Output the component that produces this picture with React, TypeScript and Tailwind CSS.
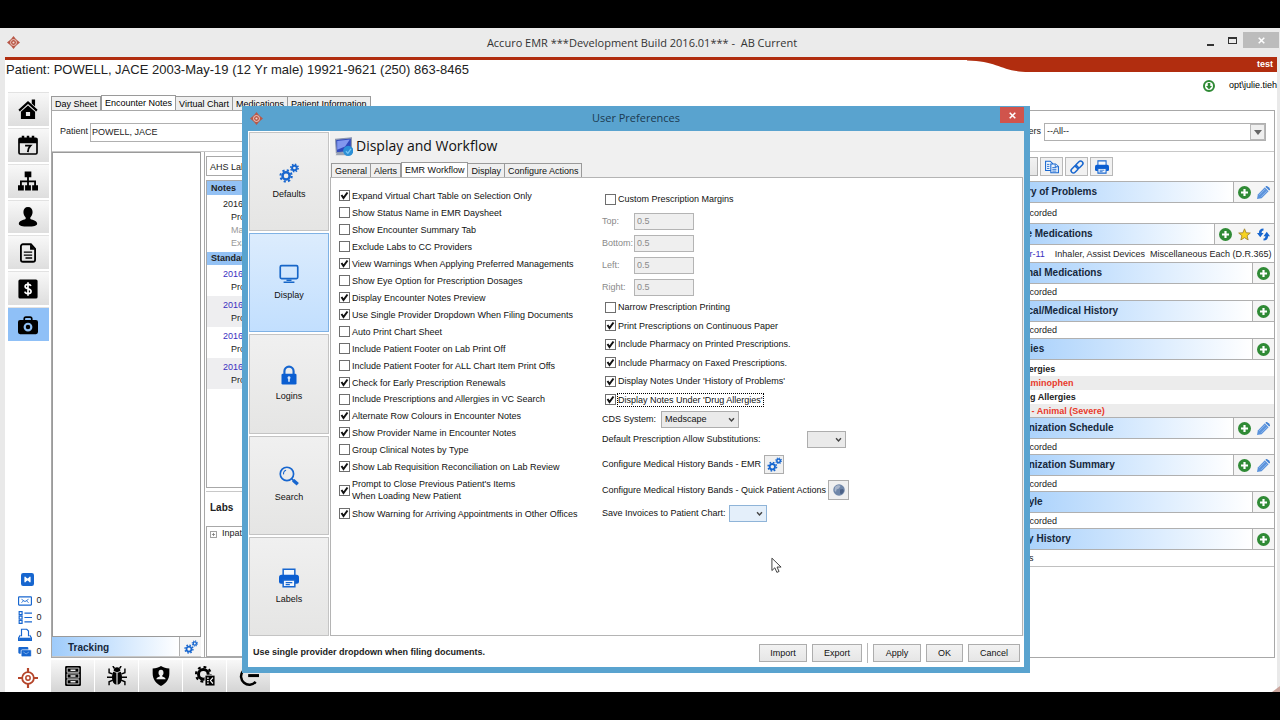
import type { ReactNode } from 'react';
import { clsx } from 'clsx';

/* ---------- icons ---------- */

type IconProps = { className?: string };

function TargetIcon({ className }: IconProps) {
  return (
    <svg viewBox="0 0 24 24" className={className} fill="none" stroke="currentColor">
      <circle cx="12" cy="12" r="7" strokeWidth="2.2" />
      <circle cx="12" cy="12" r="2.6" strokeWidth="1.8" />
      <path d="M12 0v6M12 18v6M0 12h6M18 12h6" strokeWidth="2.6" />
    </svg>
  );
}

function DiamondTargetIcon({ className }: IconProps) {
  return (
    <svg viewBox="0 0 24 24" className={className}>
      <path d="M12 0l4 5 3 3 5 4-5 4-3 3-4 5-4-5-3-3-5-4 5-4 3-3z" fill="#b85848" />
      <circle cx="12" cy="12" r="5.5" fill="none" stroke="#f3d9d2" strokeWidth="1.6" />
      <circle cx="12" cy="12" r="2" fill="#f3d9d2" />
    </svg>
  );
}

function GearsIcon({ className }: IconProps) {
  return (
    <svg viewBox="0 0 24 24" className={className} fill="none" stroke="#1766cf">
      <circle cx="8.5" cy="15.5" r="4.3" strokeWidth="3" />
      <circle cx="8.5" cy="15.5" r="6.8" strokeWidth="2.4" strokeDasharray="2.67 2.67" />
      <circle cx="18.5" cy="6" r="2.8" strokeWidth="2.4" />
      <circle cx="18.5" cy="6" r="4.5" strokeWidth="1.8" strokeDasharray="1.77 1.77" />
    </svg>
  );
}

function HomeIcon({ className }: IconProps) {
  return (
    <svg viewBox="0 0 24 24" className={className} fill="#000">
      <path d="M0.500 13L12 2.500 23.500 13l-1.700 1.900L12 6 2.200 14.900z" />
      <path d="M16.500 0.500h4v8.500l-4-3.600z" />
      <path fillRule="evenodd" d="M12 7.700l8.500 7.700V24h-17v-8.600zM9.500 15.500v5h5v-5z" />
    </svg>
  );
}

function CalendarIcon({ className }: IconProps) {
  return (
    <svg viewBox="0 0 24 24" className={className}>
      <rect x="1.200" y="4" width="21.600" height="18.800" rx="1.500" fill="none" stroke="#000" strokeWidth="2" />
      <path d="M1 4h22v6H1zM4.500 1h3v4h-3zM10.500 1h3v4h-3zM16.500 1h3v4h-3z" fill="#000" />
      <path d="M8.500 12.800h6.500c-2.500 2.500-3 4.500-3.200 7.700" fill="none" stroke="#000" strokeWidth="2.200" />
    </svg>
  );
}

function OrgChartIcon({ className }: IconProps) {
  return (
    <svg viewBox="0 0 24 24" className={className}>
      <path d="M8 0.500h8v7H8zM0 17h7v6.500H0zM8.500 17h7v6.500h-7zM17 17h7v6.500h-7z" fill="#000" />
      <path d="M12 7v11M3.500 18v-5.500h17V18" fill="none" stroke="#000" strokeWidth="2.200" />
    </svg>
  );
}

function PersonIcon({ className }: IconProps) {
  return (
    <svg viewBox="0 0 24 24" className={className} fill="#000">
      <path d="M12 0c3.600 0 5.500 2.500 5.500 6 0 2.500-1 5-2.700 6.500v2c3.500 1.300 8.200 2.500 8.200 5.500 0 2.300-4.500 3.500-11 3.500S1 22.300 1 20c0-3 4.700-4.200 8.200-5.500v-2C7.500 11 6.500 8.500 6.500 6c0-3.500 1.900-6 5.500-6z" />
    </svg>
  );
}

function DocumentIcon({ className }: IconProps) {
  return (
    <svg viewBox="0 0 24 24" className={className} fill="none" stroke="#000" strokeWidth="2.200">
      <path d="M6 1.500h9.500L20.500 7v13a2.500 2.500 0 0 1-2.500 2.500H6A2.500 2.500 0 0 1 3.500 20V4A2.500 2.500 0 0 1 6 1.500z" />
      <path d="M14.500 1.500v6.500h6z" fill="#000" stroke="none" />
      <path d="M7 11h10M7 14.500h10M9 18h8" strokeWidth="1.600" />
    </svg>
  );
}

function BillingIcon({ className }: IconProps) {
  return (
    <svg viewBox="0 0 24 24" className={className}>
      <rect x="0.500" y="0.500" width="23" height="23" rx="2" fill="#000" />
      <path
        d="M15.500 8.500C15 7 13.700 6.500 12 6.500c-2 0-3.500.9-3.500 2.600 0 3.900 7.200 1.700 7.200 5.700 0 1.800-1.600 2.800-3.700 2.800-1.900 0-3.400-.8-3.800-2.500M12 4v16"
        fill="none"
        stroke="#fff"
        strokeWidth="2"
      />
    </svg>
  );
}

function MedicalBagIcon({ className }: IconProps) {
  return (
    <svg viewBox="0 0 24 24" className={className}>
      <path d="M7.500 7V4.500A2 2 0 0 1 9.500 2.500h5a2 2 0 0 1 2 2V7" fill="none" stroke="#000" strokeWidth="2" />
      <rect x="0" y="6" width="24" height="17" rx="2.500" fill="#000" />
      <circle cx="12" cy="14.500" r="4" fill="none" stroke="#8fc0f5" strokeWidth="2.600" />
    </svg>
  );
}

function MonitorIcon({ className }: IconProps) {
  return (
    <svg viewBox="0 0 24 24" className={className} fill="none" stroke="#1766c8">
      <rect x="1.500" y="2" width="21" height="15.500" rx="1.500" strokeWidth="2" />
      <path d="M9 19.500h6M5.500 22h13" strokeWidth="1.800" />
    </svg>
  );
}

function LockIcon({ className }: IconProps) {
  return (
    <svg viewBox="0 0 24 24" className={className}>
      <path d="M6.500 11V7.500a5.500 5.500 0 0 1 11 0V11" fill="none" stroke="#1766cf" strokeWidth="2.600" />
      <rect x="3" y="10.500" width="18" height="13" rx="1.500" fill="#0b5ed1" />
      <path d="M12 13.500a1.800 1.800 0 0 1 1 3.300V20h-2v-3.200a1.800 1.800 0 0 1 1-3.300z" fill="#d7e6fa" />
    </svg>
  );
}

function SearchIcon({ className }: IconProps) {
  return (
    <svg viewBox="0 0 24 24" className={className} fill="none" stroke="#1766cf">
      <circle cx="9.500" cy="9.500" r="8" strokeWidth="2" />
      <path d="M5.500 10a4 4 0 0 1 3-4.800" strokeWidth="1.300" />
      <path d="M15.500 15.500l2 2" strokeWidth="2" />
      <path d="M17 17l5.500 5" strokeWidth="4" />
    </svg>
  );
}

function PrinterIcon({ className }: IconProps) {
  return (
    <svg viewBox="0 0 24 24" className={className}>
      <path d="M5 9V1.500h14V9" fill="#f4f8fd" stroke="#1766cf" strokeWidth="1.800" />
      <path d="M3 8h18a3 3 0 0 1 3 3v5.500a2.500 2.500 0 0 1-2.500 2.500h-19A2.500 2.500 0 0 1 0 16.500V11a3 3 0 0 1 3-3z" fill="#0b5ed1" />
      <path d="M5 14.500h14v8H5z" fill="#f4f8fd" stroke="#1766cf" strokeWidth="1.800" />
      <path d="M8 17.500h8M8 20h5" stroke="#1766cf" strokeWidth="1.400" />
    </svg>
  );
}

function CopyIcon({ className }: IconProps) {
  return (
    <svg viewBox="0 0 24 24" className={className} fill="#eef5fd" stroke="#1766cf" strokeWidth="1.800">
      <path d="M1 2h8l4 4v12H1z" />
      <path d="M10 7h8l5 4v11H10z" />
      <path d="M3.500 7.500h4M3.500 11h4M3.500 14.500h4M12.500 13h7M12.500 16h7M12.500 19h7M17.500 7v4.500H23" strokeWidth="1.500" />
    </svg>
  );
}

function LinkIcon({ className }: IconProps) {
  return (
    <svg viewBox="0 0 24 24" className={className} fill="none" stroke="#1766cf" strokeWidth="2.600">
      <rect x="-7" y="-4" width="14" height="8" rx="4" transform="translate(8 16) rotate(-45)" />
      <rect x="-7" y="-4" width="14" height="8" rx="4" transform="translate(16 8) rotate(-45)" />
    </svg>
  );
}

function PlusIcon({ className }: IconProps) {
  return (
    <svg viewBox="0 0 24 24" className={className}>
      <circle cx="12" cy="12" r="12" fill="#2f8a35" />
      <path d="M12 5.500v13M5.500 12h13" stroke="#fff" strokeWidth="4" />
    </svg>
  );
}

function DownloadIcon({ className }: IconProps) {
  return (
    <svg viewBox="0 0 24 24" className={className}>
      <circle cx="12" cy="12" r="10" fill="#fff" stroke="#2f8a35" strokeWidth="4" />
      <path d="M9.500 6h5v6H18l-6 7-6-7h3.500z" fill="#2f8a35" />
    </svg>
  );
}

function PencilIcon({ className }: IconProps) {
  return (
    <svg viewBox="0 0 24 24" className={className}>
      <path d="M0 24l1.500-8.500L14.500 2.500l7 7L8.500 22.500z" fill="#5b93dc" />
      <path d="M15.500 1.500L17 0c2.500-.5 7.500 4.500 7 7l-1.500 1.500z" fill="#3f7fd2" />
      <path d="M4 16.500L15.500 5M7.500 20L19 8.500" stroke="#a9c9f2" strokeWidth="1.200" />
    </svg>
  );
}

function StarIcon({ className }: IconProps) {
  return (
    <svg viewBox="0 0 24 24" className={className}>
      <path
        d="M12 1.500l3 7.300 7.700.5-5.900 5 1.900 7.700L12 17.800 5.300 22l1.900-7.700-5.900-5 7.700-.5z"
        fill="#f7d320"
        stroke="#a08330"
        strokeWidth="1.600"
      />
    </svg>
  );
}

function SwapIcon({ className }: IconProps) {
  return (
    <svg viewBox="0 0 24 24" className={className} fill="#1766cf">
      <path d="M12 1C6.500 1 3.500 4 3.500 9H0l6 8 6-8H8.500C8.500 6.500 9.500 5 12 4.500z" />
      <path d="M12 23c5.500 0 8.500-3 8.500-8H24l-6-8-6 8h3.500c0 2.500-1 4-3.500 4.500z" />
    </svg>
  );
}

function CabinetIcon({ className }: IconProps) {
  return (
    <svg viewBox="0 0 24 24" className={className}>
      <rect x="2.500" y="0" width="19" height="24" rx="1.500" fill="#000" />
      <path d="M5 2.500h14v5H5zM5 9.500h14v5H5zM5 16.500h14v5H5z" fill="none" stroke="#ccc" strokeWidth="1.200" />
      <path d="M9 5h6M9 12h6M9 19h6" stroke="#eee" strokeWidth="1.800" />
    </svg>
  );
}

function BugIcon({ className }: IconProps) {
  return (
    <svg viewBox="0 0 24 24" className={className}>
      <path d="M8 6c0-3 1.500-4.500 4-4.500S16 3 16 6l-4 1.500z" fill="#000" />
      <path d="M11.300 8v14.500C8 21.500 6 18.500 6 14c0-2.800.5-5 1.500-7zM12.700 8v14.500C16 21.500 18 18.500 18 14c0-2.800-.5-5-1.500-7z" fill="#000" />
      <path
        d="M6.500 9.500L2.500 8V3M17.500 9.500l4-1.500V3M6.500 13.500H0M17.500 13.500H24M7 17l-4.500 2v4M17 17l4.500 2v4M9 3L7 0M15 3l2-3"
        fill="none"
        stroke="#000"
        strokeWidth="1.700"
      />
    </svg>
  );
}

function ShieldIcon({ className }: IconProps) {
  return (
    <svg viewBox="0 0 24 24" className={className}>
      <path d="M12 0c3 2 6 3 10 3v6c0 7-4 12-10 15C6 21 2 16 2 9V3c4 0 7-1 10-3z" fill="#000" />
      <path d="M12 4.500c2 0 3 1.500 3 3.500 0 1.500-.6 2.700-1.500 3.500v1.200c2 .6 4 1.300 4 3.300h-11c0-2 2-2.700 4-3.300v-1.200C9.600 10.700 9 9.500 9 8c0-2 1-3.500 3-3.500z" fill="#eee" />
    </svg>
  );
}

function ConfigIcon({ className }: IconProps) {
  return (
    <svg viewBox="0 0 24 24" className={className}>
      <circle cx="10" cy="10" r="5.800" fill="none" stroke="#000" strokeWidth="3.600" />
      <circle cx="10" cy="10" r="8.800" fill="none" stroke="#000" strokeWidth="2.600" strokeDasharray="3.450 3.450" />
      <path d="M12 11h12v13H12z" fill="#000" stroke="#eee" strokeWidth="1" />
      <path d="M14.500 14.500h2M14.500 17.500h2M14.500 20.500h2M21.500 14l-3 3.500 3 3.500" fill="none" stroke="#fff" strokeWidth="1.400" />
    </svg>
  );
}

function LogoutIcon({ className }: IconProps) {
  return (
    <svg viewBox="0 0 24 24" className={className} fill="none" stroke="#000" strokeWidth="3">
      <path d="M18.500 4.500A10 10 0 1 0 20 19" />
      <path d="M11 11.500h13" strokeWidth="3.600" />
    </svg>
  );
}

function DisplaySettingsIcon({ className }: IconProps) {
  return (
    <svg viewBox="0 0 24 24" className={className}>
      <path d="M2 3l20-2v17L3 20z" fill="#2f49bd" stroke="#8c97b0" strokeWidth="1.500" />
      <path d="M4 5l16-2-6 9-10 4z" fill="#8297ee" />
      <path d="M4 20h12l2 3H2z" fill="#9aa3b3" />
      <circle cx="18" cy="17.500" r="6.500" fill="#2b8fd6" />
      <path d="M15 18l2.500 2.500L21.500 15" fill="none" stroke="#76c4f2" strokeWidth="1.600" />
    </svg>
  );
}

function GlobeIcon({ className }: IconProps) {
  return (
    <svg viewBox="0 0 24 24" className={className}>
      <circle cx="12" cy="12" r="11.500" fill="#6f86a8" />
      <path d="M4 6c4-4 9-4 11-2l-3 5-5 2-1 5-3-3z" fill="#a9b6cb" />
      <path d="M14 11l6-1 2 4-4 6-4-1z" fill="#4c6186" />
    </svg>
  );
}

function ChevronIcon({ className }: IconProps) {
  return (
    <svg viewBox="0 0 10 8" className={className} fill="none" stroke="#444" strokeWidth="2">
      <path d="M1.500 1.500L5 5.500l3.500-4" />
    </svg>
  );
}

function CrossIcon({ className }: IconProps) {
  return (
    <svg viewBox="0 0 10 10" className={className} fill="none" stroke="#fff" strokeWidth="2.200">
      <path d="M1 1l8 8M9 1L1 9" />
    </svg>
  );
}

/* ---------- data ---------- */

type Option = { label: string; on?: boolean; row?: string };

const leftOptions: Option[] = [
  { label: 'Expand Virtual Chart Table on Selection Only', on: true },
  { label: 'Show Status Name in EMR Daysheet' },
  { label: 'Show Encounter Summary Tab' },
  { label: 'Exclude Labs to CC Providers' },
  { label: 'View Warnings When Applying Preferred Managements', on: true },
  { label: 'Show Eye Option for Prescription Dosages' },
  { label: 'Display Encounter Notes Preview', on: true },
  { label: 'Use Single Provider Dropdown When Filing Documents', on: true },
  { label: 'Auto Print Chart Sheet' },
  { label: 'Include Patient Footer on Lab Print Off' },
  { label: 'Include Patient Footer for ALL Chart Item Print Offs' },
  { label: 'Check for Early Prescription Renewals', on: true },
  { label: 'Include Prescriptions and Allergies in VC Search', row: 'h-4' },
  { label: 'Alternate Row Colours in Encounter Notes', on: true },
  { label: 'Show Provider Name in Encounter Notes', on: true },
  { label: 'Group Clinical Notes by Type' },
  { label: 'Show Lab Requisition Reconciliation on Lab Review', on: true },
  { label: "Prompt to Close Previous Patient's Items\nWhen Loading New Patient", on: true, row: 'h-[30px]' },
  { label: 'Show Warning for Arriving Appointments in Other Offices', on: true },
];

const printOptions: Option[] = [
  { label: 'Narrow Prescription Printing' },
  { label: 'Print Prescriptions on Continuous Paper', on: true },
  { label: 'Include Pharmacy on Printed Prescriptions.', on: true },
  { label: 'Include Pharmacy on Faxed Prescriptions.', on: true },
  { label: "Display Notes Under 'History of Problems'", on: true },
];

const categories = [
  { label: 'Defaults', icon: GearsIcon },
  { label: 'Display', icon: MonitorIcon, active: true },
  { label: 'Logins', icon: LockIcon },
  { label: 'Search', icon: SearchIcon },
  { label: 'Labels', icon: PrinterIcon },
];

const navItems = [
  { label: 'Home', icon: HomeIcon },
  { label: 'Schedule', icon: CalendarIcon },
  { label: 'Workflow', icon: OrgChartIcon },
  { label: 'Patients', icon: PersonIcon },
  { label: 'Documents', icon: DocumentIcon },
  { label: 'Billing', icon: BillingIcon },
  { label: 'EMR', icon: MedicalBagIcon, active: true },
];

const toolItems = [
  { label: 'Records', icon: CabinetIcon },
  { label: 'Report a bug', icon: BugIcon },
  { label: 'Security', icon: ShieldIcon },
  { label: 'Configuration', icon: ConfigIcon },
  { label: 'Log out', icon: LogoutIcon },
];

type Band = { title: string; actions: ('add' | 'edit' | 'star' | 'swap')[]; row: string; text?: string };

const bands: Band[] = [
  { title: 'History of Problems', actions: ['add', 'edit'], row: 'h-5', text: 'None Recorded' },
  { title: 'Active Medications', actions: ['add', 'star', 'swap'], row: 'h-[17px]' },
  { title: 'External Medications', actions: ['add'], row: 'h-4', text: 'None Recorded' },
  { title: 'Surgical/Medical History', actions: ['add'], row: 'h-4', text: 'None Recorded' },
  { title: 'Allergies', actions: ['add'], row: 'h-[57px]' },
  { title: 'Immunization Schedule', actions: ['add', 'edit'], row: 'h-[15px]', text: 'None Recorded' },
  { title: 'Immunization Summary', actions: ['add', 'edit'], row: 'h-[15px]', text: 'None Recorded' },
  { title: 'Lifestyle', actions: ['add'], row: 'h-[15px]', text: 'None Recorded' },
  { title: 'Family History', actions: ['add'], row: 'h-4', text: 'Diabetes' },
];

const actionIcons = { add: PlusIcon, edit: PencilIcon, star: StarIcon, swap: SwapIcon };

/* ---------- shared controls ---------- */

function Tab({ children, active }: { children: ReactNode; active?: boolean }) {
  return (
    <button
      type="button"
      role="tab"
      aria-selected={!!active}
      className={clsx(
        'border border-b-0 border-[#9a9a9a] whitespace-nowrap px-[3px] leading-3',
        active ? 'h-4 bg-white -mb-px pb-px' : 'h-[14px] pt-px bg-[#efefef] border-l-0 first:border-l'
      )}
    >
      {children}
    </button>
  );
}

function CheckRow({ label, on, className, focused }: { label: string; on?: boolean; className?: string; focused?: boolean }) {
  return (
    <label className={clsx('flex items-center gap-0.5', className)}>
      <span className="relative flex shrink-0">
        <input
          type="checkbox"
          defaultChecked={on}
          className="peer appearance-none size-[11px] border border-[#6e6e6e] bg-white"
        />
        <svg
          viewBox="0 0 11 11"
          className="absolute inset-0 size-[11px] hidden peer-checked:block pointer-events-none"
          fill="none"
          stroke="#111"
          strokeWidth="2"
        >
          <path d="M2.500 5l2 3L8.500 2.500" />
        </svg>
      </span>
      <span className={clsx('whitespace-pre leading-3', focused && 'outline-1 outline-dotted outline-black')}>
        {label}
      </span>
    </label>
  );
}

function DropDown({ label, value, className }: { label: string; value?: string; className: string }) {
  return (
    <span className="relative flex">
      <select
        aria-label={label}
        defaultValue={value ?? ''}
        className={clsx('appearance-none h-[17px] border px-[3px] leading-none', className)}
      >
        <option>{value ?? ''}</option>
      </select>
      <ChevronIcon className="absolute right-1 top-[6px] w-[7px] h-[6px] pointer-events-none" />
    </span>
  );
}

function PushButton({ children, className }: { children?: ReactNode; className: string }) {
  return (
    <button
      type="button"
      className={clsx('border border-[#adadad] bg-linear-to-b from-[#f2f2f2] to-[#e6e6e6] leading-4', className)}
    >
      {children}
    </button>
  );
}

/* ---------- main window ---------- */

function TitleBar() {
  return (
    <header className="relative flex items-center h-[29px] shrink-0 bg-[#ebebeb] pl-[7px] pr-4">
      <DiamondTargetIcon className="size-[13px]" />
      <h1 className="flex-1 text-center font-['Open_Sans',sans-serif] text-[11px] leading-4 text-[#333]">
        Accuro EMR ***Development Build 2016.01*** -&nbsp; AB Current
      </h1>
      <div className="absolute right-px top-1 flex items-center">
        <button type="button" aria-label="Minimize" className="flex justify-center items-end w-[22px] h-[11px]">
          <span className="w-[7px] h-0.5 bg-[#333]" />
        </button>
        <button type="button" aria-label="Maximize" className="flex justify-center items-center w-[22px] h-4">
          <span className="w-[9px] h-[7px] border border-t-2 border-[#333]" />
        </button>
        <button type="button" aria-label="Close" className="flex justify-center items-center w-9 h-4 bg-[#bcbcbc]">
          <CrossIcon className="size-[7px]" />
        </button>
      </div>
    </header>
  );
}

function PatientBanner() {
  return (
    <div className="flex h-[35px] shrink-0 border-t-[3px] border-[#b12d0f]">
      <p className="flex-1 pl-px text-[13px] leading-5 text-[#222]">
        Patient: POWELL, JACE 2003-May-19 (12 Yr male) 19921-9621 (250) 863-8465
      </p>
      <div className="flex flex-col w-[310px]">
        <div className="flex h-3 shrink-0">
          <svg viewBox="0 0 62 12" className="w-[62px] h-3" fill="#b12d0f">
            <path d="M0 0h62v12C34 12 32 1 0 0.500z" />
          </svg>
          <span className="flex-1 pr-1 bg-[#b12d0f] text-right text-[9px] leading-[9px] font-bold text-white">test</span>
        </div>
        <div className="flex items-center justify-end gap-[14px] h-[27px] shrink-0 text-[9px]">
          <DownloadIcon className="size-3" />
          <span>opt\julie.tieh</span>
        </div>
      </div>
    </div>
  );
}

function NavRail() {
  return (
    <nav className="flex flex-col items-center w-[46px] shrink-0">
      <div className="flex flex-col gap-0.5 w-[41px] h-[249px]">
        {navItems.map(({ label, icon: Icon, active }) => (
          <button
            key={label}
            type="button"
            aria-label={label}
            className={clsx(
              'flex flex-1 items-center justify-center border-t border-[#e2e2e2]',
              active ? 'bg-[#8fc0f7]' : 'bg-linear-to-b from-[#f8f8f8] to-[#dedede]'
            )}
          >
            <Icon className="size-5" />
          </button>
        ))}
      </div>
      <ul className="flex flex-col items-center mt-auto text-[9px] leading-[17px] text-[#222]">
        <li className="flex items-center justify-center h-[26px]">
          <svg viewBox="0 0 24 24" className="size-[13px]">
            <rect width="24" height="24" rx="4" fill="#1766cf" />
            <path d="M7.500 7v10M16.500 7v10M8 9l8 6M8 15l8-6" stroke="#fff" strokeWidth="2.500" />
          </svg>
        </li>
        <li className="flex items-center gap-1 pl-1">
          <svg viewBox="0 0 24 16" className="w-[14px] h-[10px]" fill="none" stroke="#1766cf" strokeWidth="2">
            <rect x="1" y="1" width="22" height="14" rx="1" />
            <path d="M6 5l6 4 6-4M6 11l3-3M18 11l-3-3" strokeWidth="1.500" />
          </svg>
          0
        </li>
        <li className="flex items-center gap-1 pl-1">
          <svg viewBox="0 0 24 22" className="w-[14px] h-[13px]" fill="none" stroke="#1766cf">
            <path d="M2 1h5v5H2zM2 8.500h5v5H2zM2 16h5v5H2z" strokeWidth="2" />
            <path d="M11 3.500h13M11 11h13M11 18.500h13" strokeWidth="1.800" />
          </svg>
          0
        </li>
        <li className="flex items-center gap-1 pl-1">
          <svg viewBox="0 0 24 22" className="w-[14px] h-[13px]" fill="none" stroke="#1766cf" strokeWidth="2">
            <path d="M6 14V2h9l3 3v9" />
            <path d="M4 12l-3 5v4h22v-4l-3-5" />
            <path d="M2 18.500h20" strokeWidth="4" />
          </svg>
          0
        </li>
        <li className="flex items-center gap-1 pl-1">
          <svg viewBox="0 0 24 18" className="w-[14px] h-[10px]">
            <rect x="0" y="0" width="18" height="12" rx="2" fill="#1766cf" />
            <rect x="5" y="5" width="18.500" height="12.500" rx="2" fill="#1766cf" stroke="#fff" strokeWidth="1.200" />
            <path d="M9 9l5 3.500L19 9" fill="none" stroke="#9cc2f2" strokeWidth="1.200" />
          </svg>
          0
        </li>
      </ul>
      <TargetIcon className="size-5 mt-2 mb-1 text-[#b5452a]" />
    </nav>
  );
}

function EncounterList() {
  const entries = ['2016-Mar-11', '2016-Mar-04', '2016-Feb-12', '2016-Jan-20'];
  return (
    <section className="flex flex-col flex-1 min-w-0 pl-px border-l border-[#a8a8a8]">
      <div className="h-5 mt-1 pl-[3px] border border-[#a8a8a8] leading-5">AHS Lab Requisition</div>
      <div className="flex flex-col h-[308px] mt-1 border border-[#a8a8a8]">
        <h2 className="h-[14px] pl-1 bg-[#93c1f4] font-bold leading-[14px]">Notes</h2>
        <div className="pt-[3px] h-[57px] leading-[13px]">
          <p className="pl-4">2016-Mar-11</p>
          <p className="pl-6">Provider Note</p>
          <p className="pl-6 text-[#999]">Main Office</p>
          <p className="pl-6 text-[#999]">Exam</p>
        </div>
        <h2 className="h-[13px] pl-1 bg-[#93c1f4] font-bold leading-[13px]">Standard Notes</h2>
        {entries.map((date) => (
          <div key={date} className="h-[31px] pt-[3px] even:bg-white odd:bg-[#eeeef0] leading-[13px]">
            <p className="pl-4 text-[#3a2fc0]">{date}</p>
            <p className="pl-6">Progress Note</p>
          </div>
        ))}
      </div>
      <h2 className="h-[35px] mt-[3px] pl-1 border-t border-[#c8c8c8] text-[10px] font-bold leading-8">Labs</h2>
      <div className="flex-1 pt-px border border-[#a8a8a8]">
        <div className="flex items-center gap-[5px] h-3 pl-[3px]">
          <svg viewBox="0 0 9 9" className="size-[7px]" fill="none" stroke="#777">
            <path d="M.5.5h8v8h-8zM2.500 4.500h4M4.500 2.500v4" />
          </svg>
          Inpatient
        </div>
      </div>
    </section>
  );
}

function BandBody({ band }: { band: Band }) {
  if (band.title === 'Active Medications') {
    return (
      <p className="flex gap-[10px] whitespace-nowrap">
        <span className="text-[#3a2fc0]">2016-Mar-11</span>
        <span>Inhaler, Assist Devices&nbsp; Miscellaneous Each (D.R.365)</span>
      </p>
    );
  }
  if (band.title === 'Allergies') {
    return (
      <ul className="w-full font-bold leading-[14px]">
        <li>Drug Allergies</li>
        <li className="pl-3 bg-[#ececec] text-[#e8392b]">Acetaminophen</li>
        <li>Non-Drug Allergies</li>
        <li className="pl-1 bg-[#ececec] text-[#e8392b]">Dander - Animal (Severe)</li>
      </ul>
    );
  }
  return <p className={band.title === 'Family History' ? 'pl-1' : ''}>{band.text}</p>;
}

function HistoryBands() {
  return (
    <section className="flex flex-col w-[280px] shrink-0">
      <div className="flex gap-0.5 h-[29px] pt-[5px] pl-[22px]">
        <PushButton className="h-[19px] w-[22px]" />
        {[CopyIcon, LinkIcon, PrinterIcon].map((Icon, i) => (
          <button
            key={i}
            type="button"
            aria-label={['Copy', 'Link', 'Print'][i]}
            className="flex items-center justify-center w-[23px] h-[19px] border border-[#b8b8b8] bg-[#f1f1f1]"
          >
            <Icon className="size-[14px]" />
          </button>
        ))}
      </div>
      {bands.map((band) => (
        <div key={band.title}>
          <div className="flex h-[22px] border-y border-[#b0b0b0]">
            <h2 className="flex-1 pl-2 bg-linear-to-r from-[#9ecbfa] to-white text-[10px] leading-5 font-bold text-[#16283c]">
              {band.title}
            </h2>
            <div className="flex items-center gap-[6px] px-1 border-l border-[#b0b0b0] bg-[#f5f5f5]">
              {band.actions.map((action) => {
                const Icon = actionIcons[action];
                return (
                  <button key={action} type="button" aria-label={`${action} ${band.title}`}>
                    <Icon className="size-[13px]" />
                  </button>
                );
              })}
            </div>
          </div>
          <div className={clsx('flex items-center pt-0.5', band.row)}>
            <BandBody band={band} />
          </div>
        </div>
      ))}
      <div className="border-t border-[#c0c0c0]" />
    </section>
  );
}

function Workspace() {
  return (
    <main className="flex flex-col flex-1 min-w-0">
      <div role="tablist" className="flex items-end h-[18px] text-[9px]">
        <Tab>Day Sheet</Tab>
        <Tab active>Encounter Notes</Tab>
        <Tab>Virtual Chart</Tab>
        <Tab>Medications</Tab>
        <Tab>Patient Information</Tab>
      </div>
      <div className="flex flex-col flex-1 mr-[2px] border border-[#a8a8a8] text-[9px] text-[#222]">
        <div className="flex items-center h-[41px] shrink-0 pt-0.5 pl-2 pr-2 border-b border-[#c8c8c8]">
          <label htmlFor="patient">Patient</label>
          <input
            id="patient"
            defaultValue="POWELL, JACE"
            className="flex-1 h-[19px] ml-0.5 mr-[140px] px-px border border-[#b0b0b0]"
          />
          <label htmlFor="providers">Providers</label>
          <span className="relative flex w-[222px] ml-[3px]">
            <select id="providers" className="appearance-none w-full h-[18px] px-0.5 border border-[#b0b0b0] bg-white">
              <option>--All--</option>
            </select>
            <span className="absolute right-px top-px flex items-center justify-center w-[15px] h-4 border border-[#b8b8b8] bg-[#efefef] pointer-events-none">
              <svg viewBox="0 0 8 5" className="w-2 h-[5px]" fill="#666">
                <path d="M0 0h8L4 5z" />
              </svg>
            </span>
          </span>
        </div>
        <div className="flex flex-1">
          <section className="flex flex-col w-[149px] shrink-0 mr-[3px]">
            <div className="flex-1 border border-[#9a9a9a]" />
            <div className="flex h-5 border-b border-[#c8c8c8]">
              <h2 className="flex-1 pl-4 bg-linear-to-r from-[#9ecbfa] to-white text-[10px] leading-[21px] font-bold text-[#16283c]">
                Tracking
              </h2>
              <button
                type="button"
                aria-label="Tracking settings"
                className="flex items-center justify-center w-[22px] border-l border-[#b0b0b0] bg-[#f5f5f5]"
              >
                <GearsIcon className="size-[14px]" />
              </button>
            </div>
          </section>
          <EncounterList />
          <HistoryBands />
        </div>
      </div>
      <div className="flex h-[34px] shrink-0 pt-0.5">
        {toolItems.map(({ label, icon: Icon }) => (
          <button
            key={label}
            type="button"
            aria-label={label}
            className="flex items-center justify-center w-11 border-r border-white bg-linear-to-b from-[#f8f8f8] to-[#d4d4d4]"
          >
            <Icon className="size-5" />
          </button>
        ))}
      </div>
    </main>
  );
}

/* ---------- preferences dialog ---------- */

function RightOptions() {
  return (
    <div className="flex flex-col flex-1 pt-px">
      <CheckRow label="Custom Prescription Margins" className="h-[22px] pl-[3px]" />
      {['Top:', 'Bottom:', 'Left:', 'Right:'].map((side) => (
        <label key={side} className="flex items-center h-[22px] text-[#8a8a8a]">
          <span className="w-8">{side}</span>
          <input defaultValue="0.5" disabled className="w-[60px] h-[17px] px-0.5 border border-[#b4b4b4] bg-[#efefef]" />
        </label>
      ))}
      <div className="flex flex-col h-[111px] pl-[3px]">
        {printOptions.map((option) => (
          <CheckRow key={option.label} {...option} className="flex-1" />
        ))}
        <CheckRow label="Display Notes Under 'Drug Allergies'" on focused className="flex-1" />
      </div>
      <div className="flex items-center gap-[5px] h-5">
        CDS System:
        <DropDown label="CDS System" value="Medscape" className="w-[78px] border-[#adadad] bg-[#eaeaea]" />
      </div>
      <div className="flex items-center justify-between w-[244px] h-5">
        Default Prescription Allow Substitutions:
        <DropDown label="Default Prescription Allow Substitutions" className="w-[39px] border-[#adadad] bg-[#eaeaea]" />
      </div>
      <div className="flex items-center gap-[3px] h-[30px]">
        Configure Medical History Bands - EMR
        <button
          type="button"
          aria-label="Configure EMR bands"
          className="flex items-center justify-center w-5 h-[19px] border border-[#adadad] bg-[#f0f0f0]"
        >
          <GearsIcon className="size-[15px]" />
        </button>
      </div>
      <div className="flex items-center gap-0.5 h-[22px] whitespace-nowrap">
        Configure Medical History Bands - Quick Patient Actions
        <button
          type="button"
          aria-label="Configure quick patient actions bands"
          className="flex items-center justify-center w-[21px] h-5 border border-[#adadad] bg-[#f0f0f0]"
        >
          <GlobeIcon className="size-3" />
        </button>
      </div>
      <div className="flex items-center gap-[3px] h-6">
        Save Invoices to Patient Chart:
        <DropDown label="Save Invoices to Patient Chart" className="w-[38px] border-[#8fb4d8] bg-[#e4effa]" />
      </div>
    </div>
  );
}

function PreferencesDialog() {
  return (
    <div
      role="dialog"
      aria-labelledby="prefs-title"
      className="absolute left-[242px] right-[250px] top-[78px] bottom-[19px] flex flex-col px-[6px] pb-[6px] bg-[#59a3cf] text-[9px] text-[#111]"
    >
      <div className="relative flex items-center h-[25px] shrink-0 pl-0.5">
        <DiamondTargetIcon className="size-[13px]" />
        <h2 id="prefs-title" className="flex-1 pr-[15px] text-center font-['Open_Sans',sans-serif] text-[11px] text-[#1b3a50]">
          User Preferences
        </h2>
        <button
          type="button"
          aria-label="Close preferences"
          className="absolute right-0 top-px flex items-center justify-center w-6 h-4 bg-[#d0544c]"
        >
          <CrossIcon className="size-[7px]" />
        </button>
      </div>

      <div className="flex flex-1 min-h-0 bg-[#f0f0f0]">
        <nav className="flex flex-col gap-0.5 w-[82px] shrink-0 pt-px px-px bg-white">
          {categories.map(({ label, icon: Icon, active }) => (
            <button
              key={label}
              type="button"
              className={clsx(
                'flex flex-1 flex-col items-center justify-center gap-[5px] pt-px border',
                active
                  ? 'border-[#7fb2e5] bg-linear-to-b from-[#dcecfd] to-[#c2dffe]'
                  : 'border-[#c4c4c4] bg-linear-to-b from-[#f0f0f0] to-[#e5e5e4]'
              )}
            >
              <Icon className="size-5" />
              {label}
            </button>
          ))}
        </nav>
        <section className="flex flex-col flex-1 min-w-0">
          <div className="flex items-center gap-[3px] h-[30px] pl-1">
            <DisplaySettingsIcon className="size-[19px]" />
            <h3 className="font-['Open_Sans',sans-serif] text-[14px] leading-5">Display and Workflow</h3>
          </div>
          <div role="tablist" className="flex items-end h-4 px-px">
            <Tab>General</Tab>
            <Tab>Alerts</Tab>
            <Tab active>EMR Workflow</Tab>
            <Tab>Display</Tab>
            <Tab>Configure Actions</Tab>
          </div>
          <div role="tabpanel" className="flex flex-1 mr-px pt-[9px] pl-2 border border-[#b4b4b4] bg-white leading-3">
            <div className="flex flex-col w-[263px]">
              {leftOptions.map(({ label, on, row }) => (
                <CheckRow key={label} label={label} on={on} className={row ?? 'h-[17px]'} />
              ))}
            </div>
            <RightOptions />
          </div>
        </section>
      </div>

      <footer className="flex items-center h-[31px] shrink-0 pt-0.5 pl-[5px] pr-1 bg-white">
        <p className="flex-1 font-bold text-[#222]">Use single provider dropdown when filing documents.</p>
        <div className="flex gap-[5px]">
          <PushButton className="h-[18px] w-12">Import</PushButton>
          <PushButton className="h-[18px] w-[50px]">Export</PushButton>
          <span className="w-px h-5 -my-px bg-[#b8b8b8]" />
          <PushButton className="h-[18px] w-[48px]">Apply</PushButton>
          <PushButton className="h-[18px] w-[37px]">OK</PushButton>
          <PushButton className="h-[18px] w-[52px]">Cancel</PushButton>
        </div>
      </footer>
    </div>
  );
}

export default function App() {
  return (
    <div className="flex flex-col h-screen py-7 bg-black font-['Liberation_Sans',Arial,sans-serif] overflow-hidden">
      <div className="relative flex flex-col flex-1 bg-white">
        <TitleBar />
        <div className="flex flex-col flex-1 border-l-[5px] border-r-[3px] border-[#e9e9e9]">
          <PatientBanner />
          <div className="flex flex-1">
            <NavRail />
            <Workspace />
          </div>
        </div>
        <PreferencesDialog />
        {/* mouse pointer */}
        <svg viewBox="0 0 12 18" className="absolute left-[771px] top-[529px] w-[11px] h-[17px]">
          <path d="M1 1v13.500l3.200-3 2.200 5 2.400-1-2.200-4.800H11z" fill="#fff" stroke="#333" />
        </svg>
        {/* resize grip */}
        <svg viewBox="0 0 8 6" className="absolute right-0 bottom-0 w-2 h-[6px]" fill="#c9a49c">
          <path d="M8 0v6H0z" />
        </svg>
      </div>
    </div>
  );
}
